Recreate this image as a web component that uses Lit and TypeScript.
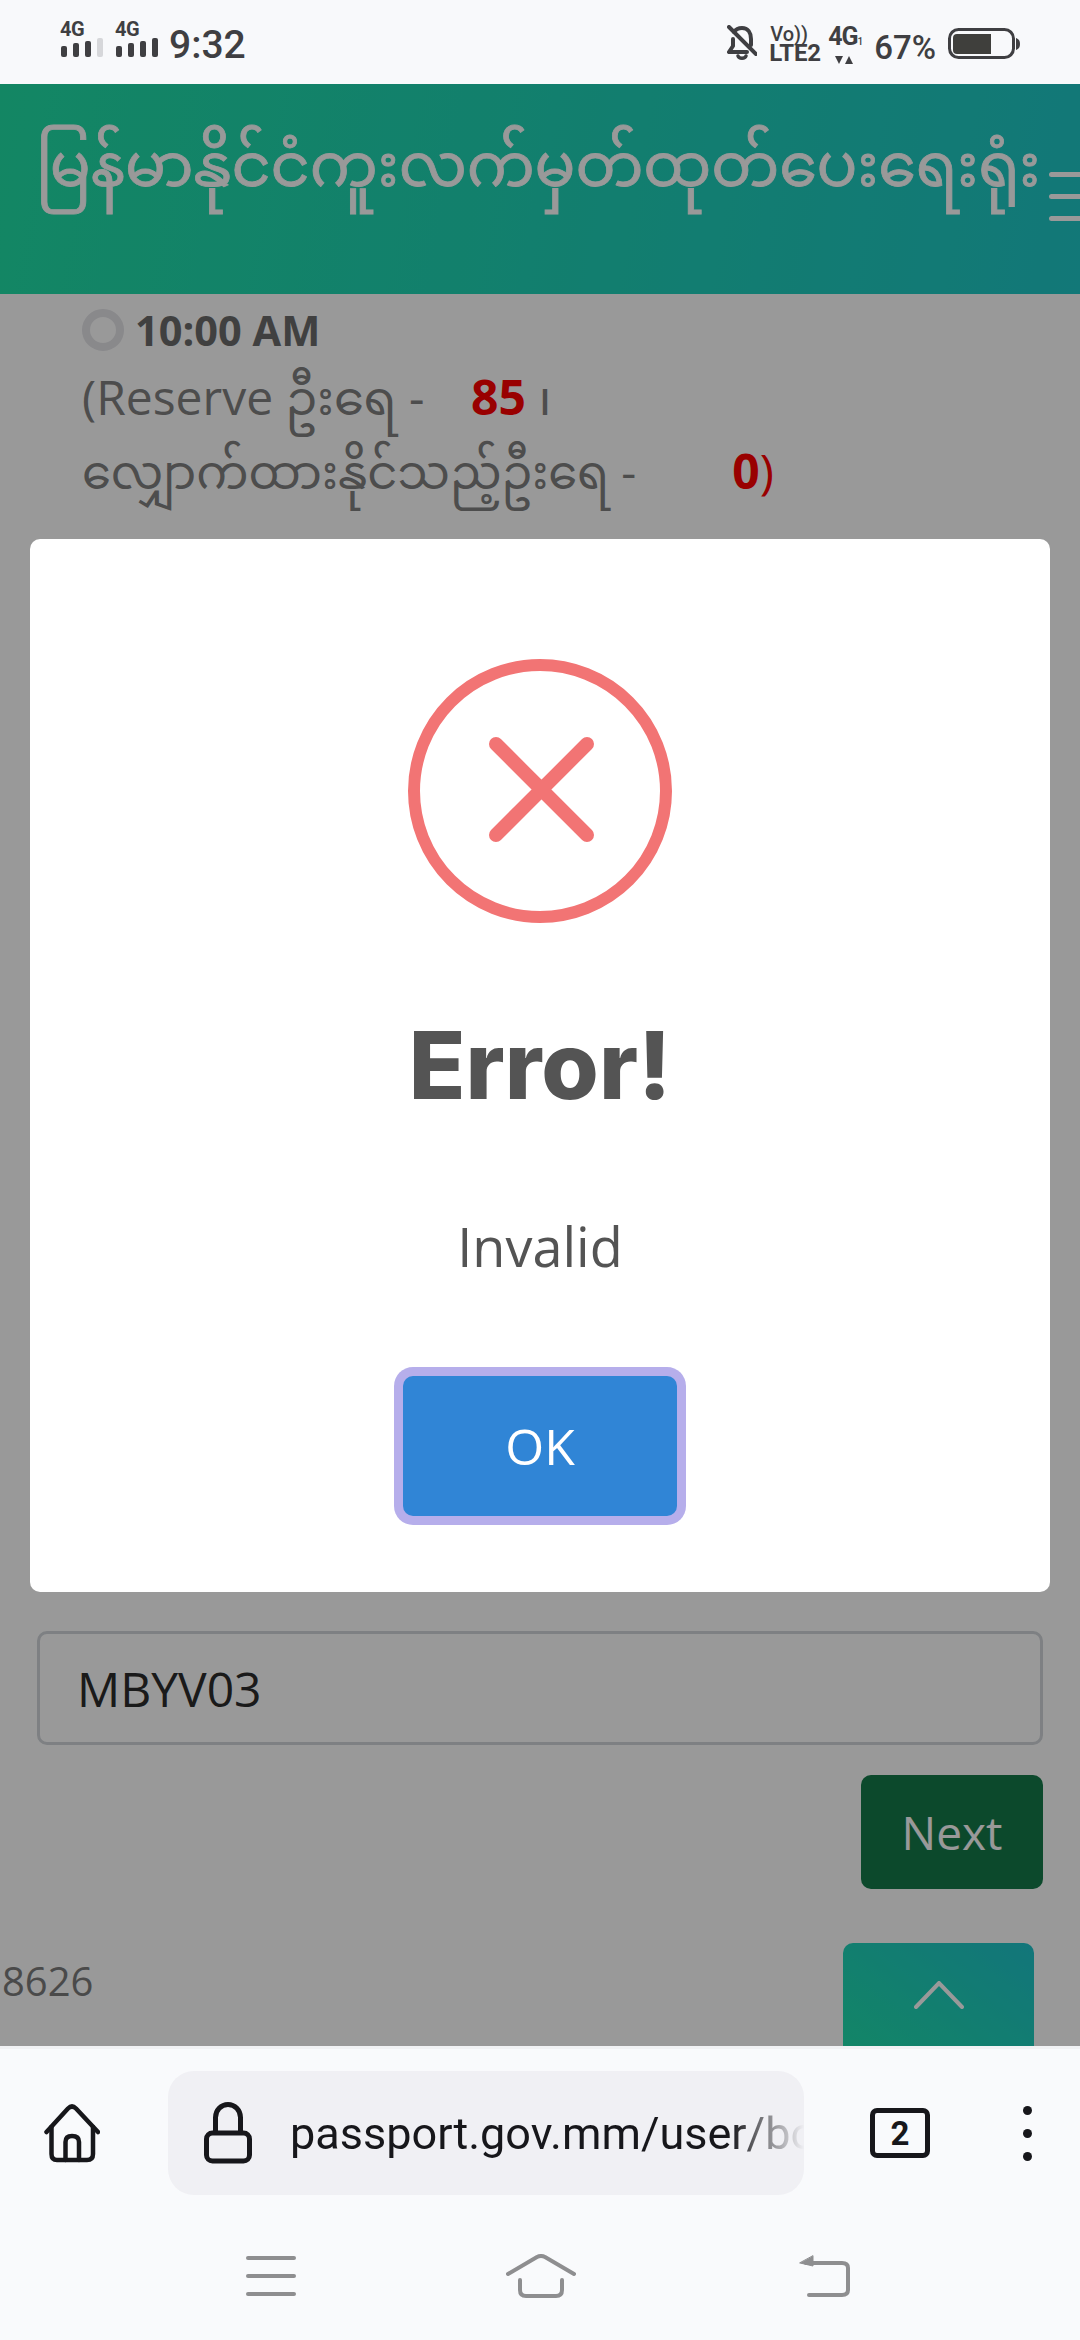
import { LitElement, html, css } from "lit";
import { customElement } from "lit/decorators.js";

const bars = (last: string) => html`<svg class="bars" viewBox="0 0 43 20" width="43" height="20">
  <rect x="1" y="8" width="6" height="11" rx="2" fill="#3f3f42"/>
  <rect x="13" y="5" width="6" height="14" rx="2" fill="#3f3f42"/>
  <rect x="25" y="3" width="6" height="16" rx="2" fill="#3f3f42"/>
  <rect x="37" y="0" width="6" height="19" rx="2" fill="${last}"/>
</svg>`;

@customElement("app-root")
export class AppRoot extends LitElement {
  static styles = css`
    :host { display: block; width: 1080px; height: 2340px; font-family: "Open Sans", "Liberation Sans", sans-serif; background: #fff; overflow: hidden; }
    .app { display: flex; flex-direction: column; height: 2340px; }

    .status { height: 84px; flex: none; background: #f8f9fb; display: flex; align-items: flex-start; color: #3f3f42; font-family: Roboto, sans-serif; }
    .status-left { display: flex; align-items: flex-start; padding: 20px 0 0 60px; }
    .sig { display: flex; flex-direction: column; width: 43px; margin-right: 12px; }
    .sig b { font-size: 20px; line-height: 18px; font-weight: 700; letter-spacing: -0.4px; }
    .bars { display: block; margin-top: 0; }
    .time { font-size: 39px; font-weight: 500; line-height: 40px; margin-top: 5px; margin-left: -1px; }
    .status-right { margin-left: auto; display: flex; align-items: flex-start; padding: 25px 60px 0 0; }
    .bell { display: block; }
    .volte { margin-left: 12px; width: 54px; line-height: 1; }
    .volte .v { font-size: 20px; line-height: 18px; font-weight: 500; display: block; padding-left: 1px; }
    .volte .l { font-size: 24px; line-height: 20px; font-weight: 700; display: block; letter-spacing: -0.2px; }
    .g4 { margin-left: 5px; width: 34px; }
    .g4 .t { font-size: 25px; line-height: 24px; font-weight: 700; display: block; letter-spacing: -1px; white-space: nowrap; }
    .g4 .t small { font-size: 10px; font-weight: 500; letter-spacing: 0; }
    .g4 svg { display: block; margin: 1px 0 0 7px; }
    .pct { font-size: 33px; line-height: 36px; font-weight: 500; margin: 5px 0 0 12px; }
    .batt { display: block; margin: 3px 0 0 12px; }

    .stage { flex: 1; position: relative; overflow: hidden; display: flex; flex-direction: column; background: #fff; min-height: 0; }
    .header { height: 210px; flex: none; background: linear-gradient(100deg, #20e0a6, #1ec8c8); display: flex; align-items: flex-start; overflow: hidden; color: #fff; padding-left: 36px; white-space: nowrap; }
    .brand { font-size: 60.5px; line-height: 140px; padding-top: 18px; width: 1013px; flex: none; font-family: "Noto Sans Myanmar", "Padauk", "Open Sans", sans-serif; -webkit-text-stroke: 0.8px #fff; letter-spacing: -0.1px; }
    .burger { flex: none; width: 60px; margin-top: 88px; display: flex; flex-direction: column; gap: 17px; }
    .burger i { display: block; height: 5px; background: #fff; border-radius: 3px; }

    .page { flex: 1; display: flex; flex-direction: column; color: #808080; min-height: 0; }
    .slot { padding: 13px 0 0 82px; font-size: 48px; line-height: 72px; height: 220px; box-sizing: border-box; }
    .slot-time { display: flex; align-items: center; gap: 11px; font-weight: 700; color: #6c6c6c; line-height: 46px; font-size: 41.5px; margin-bottom: 8px; }
    .radio { width: 42px; height: 42px; box-sizing: border-box; border: 8px solid #e4e4e8; border-radius: 50%; flex: none; }
    .line { display: block; white-space: nowrap; font-family: "Open Sans", "Noto Sans Myanmar", sans-serif; }
    .line.my { font-size: 46.5px; padding-top: 2px; }
    .red { color: #f00; font-weight: 700; }
    .gap-a { margin-left: 34px; font-size: 48px; }
    .gap-b { margin-left: 84px; font-size: 48px; }
    .paren { color: #f00; font-size: 48px; }
    .form { margin-top: 1124px; padding: 0 37px; display: flex; flex-direction: column; align-items: flex-end; }
    .input { align-self: stretch; height: 114px; box-sizing: border-box; border: 3px solid #d2d6da; border-radius: 10px; padding-left: 37px; display: flex; align-items: center; font-size: 48px; color: #2c2c2c; }
    .next { width: 182px; height: 114px; margin-top: 30px; background: #157a4a; color: #fff; border-radius: 10px; display: flex; align-items: center; justify-content: center; font-size: 46px; }
    .foot { margin-top: 54px; display: flex; justify-content: space-between; align-items: flex-start; padding: 0 46px 0 2px; }
    .num { font-size: 40px; line-height: 56px; margin-top: 10px; color: #7c7c7c; }
    .top { width: 191px; height: 140px; border-radius: 10px 10px 0 0; background: linear-gradient(to top right, #20e3a7, #1ec4cc); display: flex; justify-content: center; padding-top: 38px; box-sizing: border-box; }

    .overlay { position: absolute; inset: 0; background: rgba(0, 0, 0, 0.4); display: flex; align-items: center; justify-content: center; }
    .modal { width: 1020px; height: 1053px; background: #fff; border-radius: 10px; display: flex; flex-direction: column; align-items: center; padding-top: 120px; box-sizing: border-box; }
    .title { font-family: Inter, "Liberation Sans", sans-serif; font-weight: 800; font-size: 93px; line-height: 100px; color: #545454; margin-top: 92px; }
    .msg { font-size: 54px; line-height: 70px; color: #545454; margin-top: 96px; }
    .ok { margin-top: 95px; width: 274px; height: 140px; background: #3085d6; border-radius: 10px; box-shadow: 0 0 0 9px #b6aeeb; color: #fff; display: flex; align-items: center; justify-content: center; font-size: 50px; }

    .browser { flex: none; height: 294px; background: #f9fafc; box-shadow: inset 0 3px 0 #f1f2f4; display: flex; flex-direction: column; }
    .tools { display: flex; align-items: center; padding: 25px 0 0 44px; height: 124px; }
    .url { margin-left: 68px; width: 636px; flex: none; height: 124px; box-sizing: border-box; border-radius: 26px; background: #f0f0f4; display: flex; align-items: center; padding-left: 36px; overflow: hidden; }
    .lock { flex: none; }
    .url-text { margin-left: 38px; min-width: 0; flex: 1; overflow: hidden; font-family: Roboto, sans-serif; font-size: 45px; color: #17171b; white-space: nowrap; -webkit-mask-image: linear-gradient(to right, #000 440px, transparent 514px); mask-image: linear-gradient(to right, #000 440px, transparent 514px); }
    .tabs { margin-left: 66px; width: 60px; height: 50px; flex: none; box-sizing: border-box; border: 5px solid #17171b; border-radius: 7px; display: flex; align-items: center; justify-content: center; font-family: Roboto, sans-serif; font-weight: 700; font-size: 33px; color: #17171b; }
    .dots { margin-left: 93px; display: flex; flex-direction: column; gap: 14px; }
    .dots i { width: 9px; height: 9px; border-radius: 50%; background: #17171b; display: block; }
    .nav { display: flex; align-items: center; padding: 59px 0 0 246px; }
    .menu { display: flex; flex-direction: column; gap: 14px; width: 50px; }
    .menu i { height: 4px; background: #8e8e90; border-radius: 2px; display: block; }
    .nav-home { margin-left: 210px; }
    .nav-back { margin-left: 222px; }
  `;

  render() {
    return html`<div class="app">
      <div class="status">
        <div class="status-left">
          <div class="sig"><b>4G</b>${bars("#d6d7da")}</div>
          <div class="sig"><b>4G</b>${bars("#3f3f42")}</div>
          <div class="time">9:32</div>
        </div>
        <div class="status-right">
          <svg class="bell" width="30" height="36" viewBox="0 0 30 36" fill="none" stroke="#3f3f42" stroke-width="4" stroke-linecap="round" stroke-linejoin="round">
            <path d="M7 7 C9 4 12 3 15 3 C21 3 24 8 24 14 V20"/>
            <path d="M6 14 V21 L2 27 H20"/>
            <path d="M2 2 L29 29"/>
            <path d="M11 31 C12 34 18 34 19 31" stroke-width="3.5"/>
          </svg>
          <div class="volte"><span class="v">Vo))</span><span class="l">LTE2</span></div>
          <div class="g4"><span class="t">4G<small>1</small></span>
            <svg width="18" height="10" viewBox="0 0 18 10" fill="#3f3f42"><path d="M0 1 H8 L4 9 Z"/><path d="M10 9 H18 L14 1 Z"/></svg>
          </div>
          <div class="pct">67%</div>
          <svg class="batt" width="72" height="32" viewBox="0 0 72 32">
            <rect x="1.5" y="1.5" width="64" height="28" rx="9" fill="none" stroke="#3f3f42" stroke-width="3"/>
            <path d="M9 6 H43 V26 H9 A4 4 0 0 1 5 22 V10 A4 4 0 0 1 9 6 Z" fill="#3f3f3c"/>
            <path d="M68 10 C71 11 72 13 72 16 C72 19 71 21 68 22 Z" fill="#3f3f42"/>
          </svg>
        </div>
      </div>

      <div class="stage">
        <div class="header">
          <div class="brand">မြန်မာနိုင်ငံကူးလက်မှတ်ထုတ်ပေးရေးရုံး</div>
          <div class="burger"><i></i><i></i><i></i></div>
        </div>
        <div class="page">
          <div class="slot">
            <div class="slot-time"><span class="radio"></span>10:00 AM</div>
            <span class="line">(Reserve ဦးရေ - <span class="red gap-a">85</span> ၊</span>
            <span class="line my">လျှောက်ထားနိုင်သည့်ဦးရေ - <span class="red gap-b">0</span><span class="paren">)</span></span>
          </div>
          <div class="form">
            <div class="input">MBYV03</div>
            <div class="next">Next</div>
          </div>
          <div class="foot">
            <div class="num">8626</div>
            <div class="top">
              <svg width="50" height="28" viewBox="0 0 50 28" fill="none" stroke="#fff" stroke-width="4" stroke-linecap="round"><path d="M2 26 L25 2 L48 26"/></svg>
            </div>
          </div>
        </div>
        <div class="overlay">
          <div class="modal">
            <svg width="264" height="264" viewBox="0 0 264 264" fill="none" stroke="#f27474" stroke-width="12" stroke-linecap="round">
              <circle cx="132" cy="132" r="126"/>
              <path d="M88 85 L179 176 M179 85 L88 176" stroke-width="14"/>
            </svg>
            <div class="title">Error!</div>
            <div class="msg">Invalid</div>
            <div class="ok">OK</div>
          </div>
        </div>
      </div>

      <div class="browser">
        <div class="tools">
          <svg width="56" height="60" viewBox="0 0 56 60" fill="none" stroke="#17171b" stroke-width="4.5" stroke-linecap="round" stroke-linejoin="round">
            <path d="M2.5 29 L24 5.5 Q28 1.5 32 5.5 L54 29"/>
            <path d="M7.5 24 V51 Q7.5 57 13 57 H43 Q49 57 49 51 V24"/>
            <path d="M21.5 57 V39 Q21.5 33 28 33 Q35 33 35 39 V57"/>
          </svg>
          <div class="url">
            <svg class="lock" width="48" height="62" viewBox="0 0 48 62" fill="none" stroke="#17171b" stroke-width="5" stroke-linejoin="round">
              <rect x="2.5" y="31" width="43" height="28" rx="6"/>
              <path d="M11.5 31 V15.5 A12.5 13 0 0 1 36.5 15.5 V31"/>
            </svg>
            <div class="url-text">passport.gov.mm/user/bo</div>
          </div>
          <div class="tabs">2</div>
          <div class="dots"><i></i><i></i><i></i></div>
        </div>
        <div class="nav">
          <div class="menu"><i></i><i></i><i></i></div>
          <svg class="nav-home" width="70" height="44" viewBox="0 0 70 44" fill="none" stroke="#8e8e90" stroke-width="4" stroke-linecap="round" stroke-linejoin="round">
            <path d="M2 20 L31 3 Q35 1 39 3 L68 20"/>
            <path d="M14 26 V36 Q14 42 20 42 H50 Q56 42 56 36 V26"/>
          </svg>
          <svg class="nav-back" width="52" height="44" viewBox="0 0 52 44" fill="none" stroke="#8e8e90" stroke-width="4" stroke-linecap="round" stroke-linejoin="round">
            <path d="M8 9 H44 Q50 9 50 14 V36 Q50 41 44 41 H11"/>
            <path d="M15 2 V12 L2 9 Z" fill="#8e8e90" stroke-width="1"/>
          </svg>
        </div>
      </div>
    </div>`;
  }
}
